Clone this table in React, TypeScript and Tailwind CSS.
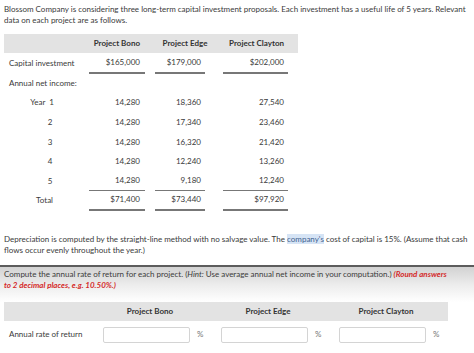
import React from "react";

const years = [
  { label: "1", bono: "14,280", edge: "18,360", clayton: "27,540" },
  { label: "2", bono: "14,280", edge: "17,340", clayton: "23,460" },
  { label: "3", bono: "14,280", edge: "16,320", clayton: "21,420" },
  { label: "4", bono: "14,280", edge: "12,240", clayton: "13,260" },
  { label: "5", bono: "14,280", edge: "9,180", clayton: "12,240" },
];

const Row = ({
  label,
  values,
  line,
}: {
  label: React.ReactNode;
  values: string[];
  line?: string;
}) => (
  <div className="flex h-[19.6px]">
    <div className="w-[85px] flex items-center">{label}</div>
    <div className={`w-[56px] flex items-center justify-end pr-[5px] ${line ?? ""}`}>{values[0]}</div>
    <div className="w-[10px]" />
    <div className={`w-[50px] flex items-center justify-end pr-[4px] ${line ?? ""}`}>{values[1]}</div>
    <div className="w-[18px]" />
    <div className={`w-[65px] flex items-center justify-end pr-[4px] ${line ?? ""}`}>{values[2]}</div>
  </div>
);

const RateInput = () => (
  <div className="w-[118px] flex items-center">
    <div className="ml-[12px] w-[87px] h-[16px] border border-[#d4d4d4] bg-white rounded-[2px]" />
    <span className="ml-[7px] text-[#777]">%</span>
  </div>
);

export default function App() {
  return (
    <div
      className="w-[474px] h-[353px] bg-white text-[#3a3a3a] text-[8px] leading-[11px] overflow-hidden"
      style={{ fontFamily: "Lato, 'Noto Sans', sans-serif" }}
    >
      <p className="pt-[4px] px-[4px]">
        Blossom Company is considering three long-term capital investment proposals. Each investment has a useful
        life of 5 years. Relevant data on each project are as follows.
      </p>

      <div className="mt-[8px] ml-[4px] w-[294px]">
        <div className="flex h-[19px] bg-[#e3e3e3] items-center font-bold text-[#333]">
          <div className="w-[85px]" />
          <div className="w-[56px] text-right pr-[5px]">Project Bono</div>
          <div className="w-[74px] text-center pl-[6px]">Project Edge</div>
          <div className="w-[69px] text-right pr-[4px] whitespace-nowrap">Project Clayton</div>
        </div>
        <div className="mt-px">
          <Row
            label={<span className="pl-[5px]">Capital investment</span>}
            values={["$165,000", "$179,000", "$202,000"]}
            line="border-b-2 border-[#777]"
          />
          <Row label={<span className="pl-[5px]">Annual net income:</span>} values={["", "", ""]} />
          {years.map((y, i) => (
            <Row
              key={y.label}
              label={
                <div className="ml-[27px] w-[23px] flex justify-end">
                  {i === 0 && <span className="mr-[4px]">Year</span>}
                  <span className="w-[8px] text-center">{y.label}</span>
                </div>
              }
              values={[y.bono, y.edge, y.clayton]}
              line={i === 4 ? "border-b border-[#777]" : undefined}
            />
          ))}
          <Row
            label={<div className="ml-[27px] w-[22px] text-right">Total</div>}
            values={["$71,400", "$73,440", "$97,920"]}
            line="border-b-2 border-[#777]"
          />
        </div>
      </div>

      <p className="mt-[23px] px-[4px]">
        Depreciation is computed by the straight-line method with no salvage value. The{" "}
        <span className="bg-[#d6e4f5] text-[#3f628f]">company's</span> cost of capital is 15%. (Assume that cash
        flows occur evenly throughout the year.)
      </p>

      <div className="mt-[9px] border-t-2 border-[#5c5c5c] bg-linear-to-b from-[#d2d2d2] via-[#ececec] to-white pt-[2px] px-[4px] pb-[11px]">
        Compute the annual rate of return for each project. (<i>Hint:</i> Use average annual net income in your
        computation.) <b className="italic text-[#d42a2a]">(Round answers</b>
        <br />
        <b className="italic text-[#d42a2a]">to 2 decimal places, e.g. 10.50%.)</b>
      </div>

      <div className="ml-[4px] w-[444px]">
        <div className="flex h-[19px] bg-[#e3e3e3] items-center font-bold text-[#333]">
          <div className="w-[87px]" />
          <div className="w-[118px] text-center">Project Bono</div>
          <div className="w-[118px] text-center">Project Edge</div>
          <div className="w-[118px] text-center">Project Clayton</div>
        </div>
        <div className="flex h-[22px] items-end">
          <div className="w-[87px] pl-[5px] h-[16px] flex items-center">Annual rate of return</div>
          <RateInput />
          <RateInput />
          <RateInput />
        </div>
      </div>
    </div>
  );
}
